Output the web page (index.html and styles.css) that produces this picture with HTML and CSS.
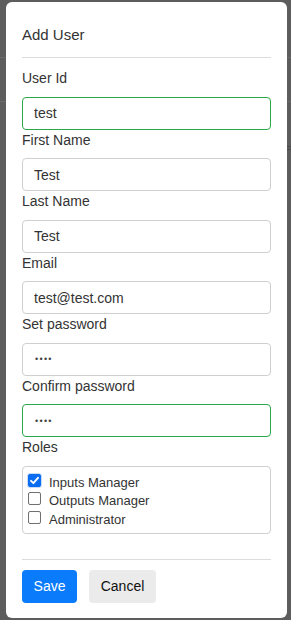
FILE: index.html
```html
<!DOCTYPE html>
<html lang="en">
<head>
<meta charset="utf-8">
<title>Add User</title>
<link rel="stylesheet" href="styles.css">
</head>
<body>
<div class="page">
  <div class="page-line first"></div>
  <div class="page-line second"></div>
  <div class="page-mark"></div>
</div>
<div class="backdrop"></div>
<div class="modal">
  <div class="modal-header">
    <h5 class="modal-title">Add User</h5>
  </div>
  <form class="modal-body">
    <div class="group">
      <label class="label">User Id</label>
      <input class="control valid" type="text" value="test">
    </div>
    <div class="group">
      <label class="label">First Name</label>
      <input class="control" type="text" value="Test">
    </div>
    <div class="group">
      <label class="label">Last Name</label>
      <input class="control" type="text" value="Test">
    </div>
    <div class="group">
      <label class="label">Email</label>
      <input class="control" type="text" value="test@test.com">
    </div>
    <div class="group">
      <label class="label">Set password</label>
      <input class="control password" type="password" value="test">
    </div>
    <div class="group">
      <label class="label">Confirm password</label>
      <input class="control password valid" type="password" value="test">
    </div>
    <div class="group">
      <label class="label">Roles</label>
      <div class="roles">
        <label class="role">
          <span class="check checked"><svg viewBox="0 0 13 13" width="13" height="13"><path d="M3 6.8 L5.4 9.2 L10 3.8" fill="none" stroke="#fff" stroke-width="1.9" stroke-linecap="round" stroke-linejoin="round"/></svg></span>
          <span class="role-text">Inputs Manager</span>
        </label>
        <label class="role">
          <span class="check"></span>
          <span class="role-text">Outputs Manager</span>
        </label>
        <label class="role">
          <span class="check"></span>
          <span class="role-text">Administrator</span>
        </label>
      </div>
    </div>
  </form>
  <div class="modal-footer">
    <button class="btn btn-primary" type="button">Save</button>
    <button class="btn btn-secondary" type="button">Cancel</button>
  </div>
</div>
</body>
</html>
```

FILE: styles.css
```css
* { box-sizing: border-box; }

html, body {
  margin: 0;
  padding: 0;
  height: 620px;
  overflow: hidden;
}

body {
  background: #5d5d5d;
  font-family: "Liberation Sans", Arial, sans-serif;
  color: #333;
  position: relative;
}

.page {
  padding-top: 57px;
}

.page-line {
  height: 1px;
  background: #6a6a6a;
}

.page-line.second {
  margin-top: 43px;
}

.page-mark {
  margin: 44px 0 0 286px;
  width: 5px;
  height: 4px;
  border-top: 1px solid #4a4a4a;
  border-bottom: 1px solid #4a4a4a;
}

.modal {
  position: absolute;
  top: 2px;
  left: 6px;
  width: 281px;
  background: #fff;
  border-radius: 6px;
  padding: 0 16px;
}

.modal-header {
  padding: 22px 0 11px;
  border-bottom: 1px solid #dcdcdc;
}

.modal-title {
  margin: 0;
  font-size: 15px;
  font-weight: normal;
  line-height: 22px;
  color: #333;
}

.modal-body {
  margin: 0;
  padding: 10px 0 25px;
  display: flex;
  flex-direction: column;
}

.group {
  display: flex;
  flex-direction: column;
}

.label {
  font-size: 14px;
  line-height: 20.5px;
  margin-bottom: 8px;
  color: #333;
}

.control {
  display: block;
  width: 100%;
  height: 33px;
  margin: 0;
  padding: 0 11px;
  font-family: "Liberation Sans", Arial, sans-serif;
  font-size: 14px;
  color: #333;
  background: #fff;
  border: 1px solid #cfcfcf;
  border-radius: 4px;
  outline: none;
}

.control.password {
  font-size: 9px;
  letter-spacing: 1.3px;
  padding-left: 12px;
  color: #444;
}

.control.valid {
  border-color: #2ba84a;
}

.roles {
  height: 68px;
  border: 1px solid #cfcfcf;
  border-radius: 4px;
  padding: 7px 4px 2px;
  display: flex;
  flex-direction: column;
}

.role {
  display: flex;
  align-items: flex-start;
  height: 18.5px;
  font-size: 13px;
  line-height: 18.5px;
  color: #333;
}

.check {
  flex: none;
  width: 13px;
  height: 13px;
  margin: 0 8px 0 1px;
  border: 1px solid #707070;
  border-radius: 2px;
  background: #fff;
  display: flex;
}

.check.checked {
  background: #0a6cf0;
  border-color: #0a6cf0;
  box-shadow: 0 0 0 1px #c8dcf8;
}

.check svg {
  margin: -1px;
}

.modal-footer {
  border-top: 1px solid #dcdcdc;
  padding: 10px 0 15px;
  display: flex;
  gap: 12px;
}

.btn {
  height: 33px;
  padding: 0 11.6px;
  border: none;
  border-radius: 4px;
  font-family: "Liberation Sans", Arial, sans-serif;
  font-size: 14px;
  line-height: 33px;
}

.btn-primary {
  background: #0a7bfb;
  color: #fff;
}

.btn-secondary {
  background: #ebebeb;
  color: #111;
}
```
